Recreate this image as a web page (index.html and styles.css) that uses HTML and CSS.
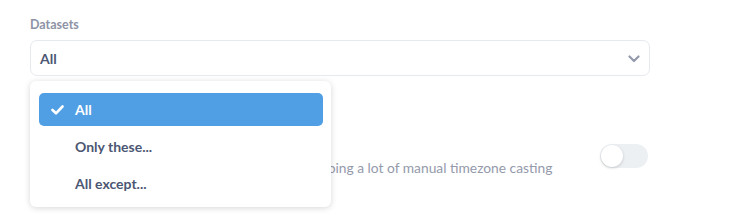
FILE: index.html
```html
<!DOCTYPE html>
<html lang="en">
<head>
    <meta charset="UTF-8">
    <title>Database settings</title>
    <link rel="stylesheet" href="styles.css">
</head>
<body>
    <div class="form">
        <div class="field">
            <label class="field-label">Datasets</label>
            <div class="select">
                <span class="select-value">All</span>
                <svg class="chevron" width="12" height="8" viewBox="0 0 12 8">
                    <path d="M1.5 1.5 L6 6 L10.5 1.5" fill="none" stroke="#949aab" stroke-width="2.2" stroke-linecap="round" stroke-linejoin="round"/>
                </svg>
            </div>

            <div class="popover">
                <div class="option selected">
                    <svg class="check" width="13" height="10" viewBox="0 0 13 10">
                        <path d="M1.5 5 L5 8.3 L11.5 1.5" fill="none" stroke="#fff" stroke-width="2.6" stroke-linecap="round" stroke-linejoin="round"/>
                    </svg>
                    <span>All</span>
                </div>
                <div class="option"><span>Only these...</span></div>
                <div class="option"><span>All except...</span></div>
            </div>
        </div>

        <div class="setting">
            <div class="setting-text">
                <div class="setting-title">Use the Java Virtual Machine (JVM) timezone</div>
                <div class="setting-desc">We suggest that you leave this off unless you're doing a lot of manual timezone casting</div>
            </div>
            <div class="toggle"><div class="knob"></div></div>
        </div>
    </div>
</body>
</html>
```

FILE: styles.css
```css
html, body {
    height: 100%;
}
body {
    margin: 0;
    background-color: #fff;
    font-family: Lato, "Noto Sans", sans-serif;
    color: #4c5773;
}
.form {
    width: 620px;
    padding: 17px 0 0 30px;
}
.field {
    position: relative;
}
.field-label {
    display: block;
    font-size: 12.5px;
    font-weight: 700;
    color: #8d93a5;
    margin-bottom: 8px;
}
.select {
    height: 34px;
    border: 1px solid #e6e9ee;
    border-radius: 7px;
    display: flex;
    align-items: center;
    justify-content: space-between;
    padding: 0 9px 0 9px;
}
.select-value {
    font-size: 14px;
    font-weight: 700;
    color: #4c5773;
}
.chevron {
    margin-top: 2px;
}
.popover {
    position: absolute;
    top: 64px;
    left: 0;
    width: 284px;
    padding: 12px 8px 7px 9px;
    background-color: #fff;
    border-radius: 6px;
    box-shadow: 0 1px 6px rgba(0, 0, 0, 0.16);
    display: flex;
    flex-direction: column;
    gap: 4px;
    z-index: 2;
}
.option {
    height: 33px;
    border-radius: 5px;
    display: flex;
    align-items: center;
    padding-left: 36px;
    font-size: 14px;
    font-weight: 700;
    color: #4c5773;
    position: relative;
}
.option.selected {
    background-color: #509ee3;
    color: #fff;
}
.check {
    position: absolute;
    left: 12px;
    top: 12px;
}
.setting {
    display: flex;
    justify-content: space-between;
    align-items: center;
    margin-top: 62px;
}
.setting-title {
    font-size: 14px;
    font-weight: 700;
    color: #4c5773;
    margin-bottom: 4px;
}
.setting-desc {
    font-size: 13.8px;
    color: #949aab;
}
.toggle {
    width: 48px;
    height: 24px;
    border-radius: 12px;
    background-color: #edf0f3;
    margin-right: 2px;
    margin-top: -2px;
    position: relative;
}
.knob {
    position: absolute;
    top: 1px;
    left: 1px;
    width: 22px;
    height: 22px;
    border-radius: 50%;
    background-color: #fff;
    box-shadow: 0 1px 3px rgba(0, 0, 0, 0.18);
}
```
